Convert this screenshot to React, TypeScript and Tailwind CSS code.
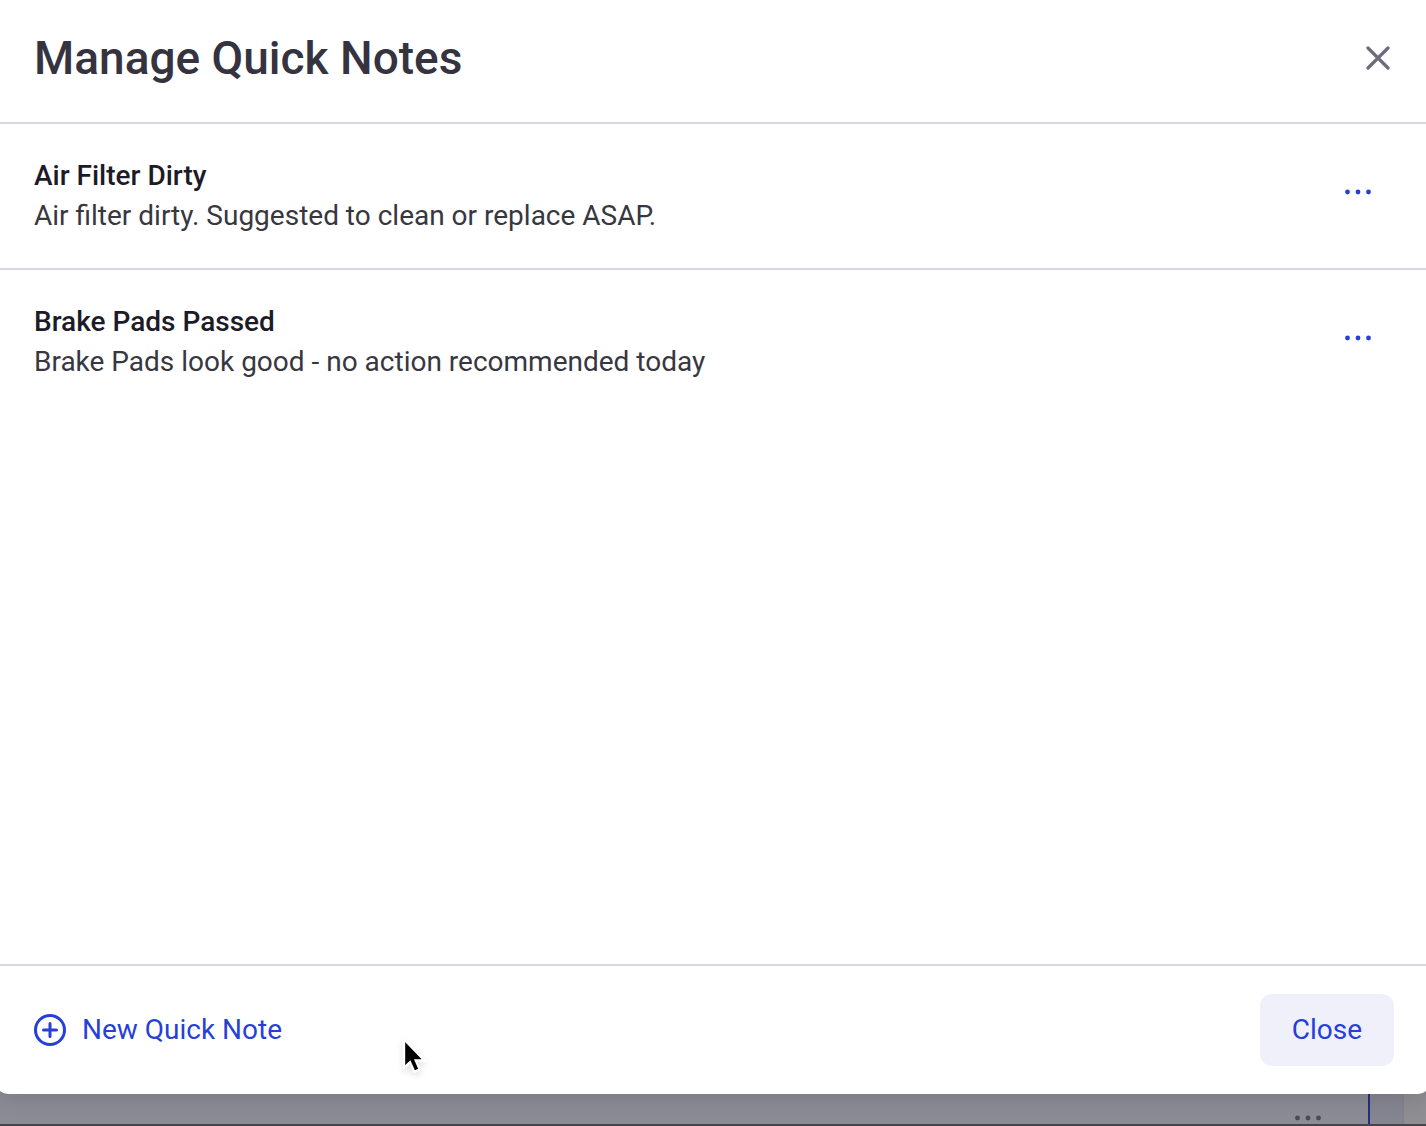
const notes = [
  { title: "Air Filter Dirty", text: "Air filter dirty. Suggested to clean or replace ASAP." },
  { title: "Brake Pads Passed", text: "Brake Pads look good - no action recommended today" },
];

function Dots() {
  return (
    <svg width="28" height="6" viewBox="0 0 28 6" fill="currentColor" aria-hidden="true">
      <circle cx="3.5" cy="3" r="2.4" />
      <circle cx="14" cy="3" r="2.4" />
      <circle cx="24.5" cy="3" r="2.4" />
    </svg>
  );
}

function Pointer() {
  return (
    <svg
      className="pointer-events-none absolute bottom-4 left-[404px] drop-shadow-md"
      width="30"
      height="40"
      viewBox="0 0 30 40"
      aria-hidden="true"
    >
      <path
        d="M4 1.2V29.8L10 24.3L14.2 33.8L19.8 31.4L15.8 22.5H24.4Z"
        fill="#000"
        stroke="#fff"
        strokeWidth="2.4"
        strokeLinejoin="miter"
      />
    </svg>
  );
}

export default function App() {
  return (
    <div className="flex min-h-screen flex-col overflow-x-hidden bg-[#8b8c95] font-['Roboto',sans-serif]">
      <section
        role="dialog"
        aria-labelledby="dialog-title"
        className="relative z-10 -mx-1 flex flex-1 flex-col rounded-b-xl bg-white text-[28px] leading-10 shadow-[0_4px_24px_rgba(0,0,0,0.14)]"
      >
        <header className="flex items-start justify-between border-b-2 border-[#d9d8e2] pt-7 pr-9 pb-[34px] pl-[38px]">
          <h1 id="dialog-title" className="text-[46px] leading-[60px] font-medium text-[#35333f]">
            Manage Quick Notes
          </h1>
          <button type="button" aria-label="Close dialog" className="mt-3.5 flex size-8 items-center justify-center text-[#6c6b7b]">
            <svg width="24" height="24" viewBox="0 0 24 24" fill="none" stroke="currentColor" strokeWidth="3.2" strokeLinecap="round" aria-hidden="true">
              <path d="M2 2L22 22M22 2L2 22" />
            </svg>
          </button>
        </header>

        <ul className="flex-1 divide-y-2 divide-[#d9d8e2]">
          {notes.map((note) => (
            <li key={note.title} className="flex items-start justify-between py-8 pr-9 pl-[38px]">
              <div>
                <h2 className="font-medium text-[#1d1b27]">{note.title}</h2>
                <p className="text-[#38373f]">{note.text}</p>
              </div>
              <button type="button" aria-label={`Options for ${note.title}`} className="flex size-[72px] items-center justify-center text-[#273fd9]">
                <Dots />
              </button>
            </li>
          ))}
        </ul>

        <footer className="flex items-center justify-between border-t-2 border-[#d9d8e2] py-7 pr-9 pl-[38px]">
          <button type="button" className="flex items-center gap-4 text-[#273fd9]">
            <svg width="32" height="32" viewBox="0 0 32 32" fill="none" stroke="currentColor" aria-hidden="true">
              <circle cx="16" cy="16" r="14.5" strokeWidth="3" />
              <path d="M16 9.5V22.5M9.5 16H22.5" strokeWidth="3" strokeLinecap="round" />
            </svg>
            New Quick Note
          </button>
          <button type="button" className="rounded-xl bg-[#f0f0fa] px-8 py-4 text-[#273fd9]">
            Close
          </button>
        </footer>
        <Pointer />
      </section>

      <div className="flex h-8 border-b-2 border-[#47444d] text-[#4b4a56]">
        <div className="flex flex-1 items-end justify-end border-r-2 border-[#242f83] pr-[46px] pb-[3px]">
          <Dots />
        </div>
        <div className="w-[34px] border-r-2 border-[#84838d] bg-[#868693]" />
        <div className="w-[22px] bg-[#8e8e93]" />
      </div>
    </div>
  );
}
